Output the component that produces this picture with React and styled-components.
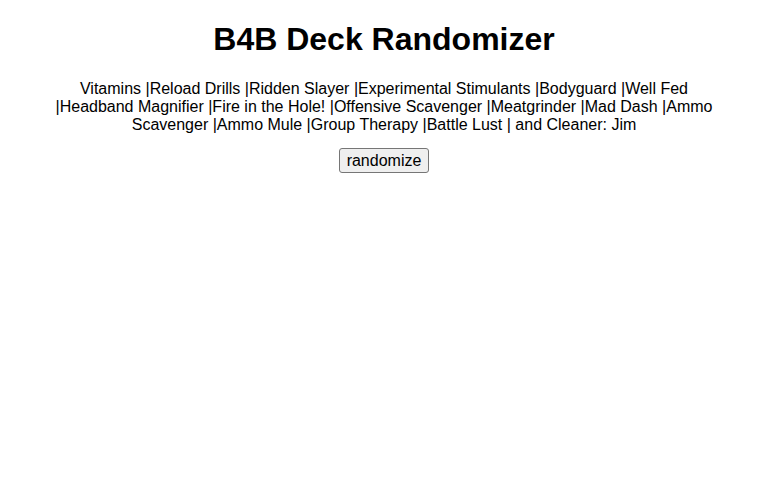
import React from "react";
import styled, { createGlobalStyle } from "styled-components";

const GlobalStyle = createGlobalStyle`
  html, body {
    background: #ffffff;
  }
  body {
    margin: 0 8px 8px;
    font-family: "Liberation Sans", Arial, sans-serif;
    color: #000000;
  }
`;

const Page = styled.main`
  text-align: center;
`;

const Title = styled.h1`
  font-size: 32px;
  font-weight: bold;
  margin: 21.44px 0;
`;

const DeckList = styled.p`
  font-size: 16px;
  line-height: normal;
  max-width: 672px;
  margin: 16px auto 14px;
`;

const ActionButton = styled.button`
  font-family: "Liberation Sans", Arial, sans-serif;
  font-size: 16px;
  line-height: normal;
  color: #000000;
  background: #efefef;
  border: 1px solid #767676;
  border-radius: 3px;
  padding: 3px 7px 2px;
  cursor: pointer;

  &:hover {
    background: #e5e5e5;
  }
`;

const cards = [
  "Vitamins",
  "Reload Drills",
  "Ridden Slayer",
  "Experimental Stimulants",
  "Bodyguard",
  "Well Fed",
  "Headband Magnifier",
  "Fire in the Hole!",
  "Offensive Scavenger",
  "Meatgrinder",
  "Mad Dash",
  "Ammo Scavenger",
  "Ammo Mule",
  "Group Therapy",
  "Battle Lust",
];

export default function App() {
  const deck = cards.map((c) => c + " |").join("") + " and Cleaner: Jim";
  return (
    <>
      <GlobalStyle />
      <Page>
        <Title>B4B Deck Randomizer</Title>
        <DeckList>{deck}</DeckList>
        <ActionButton type="button">randomize</ActionButton>
      </Page>
    </>
  );
}
